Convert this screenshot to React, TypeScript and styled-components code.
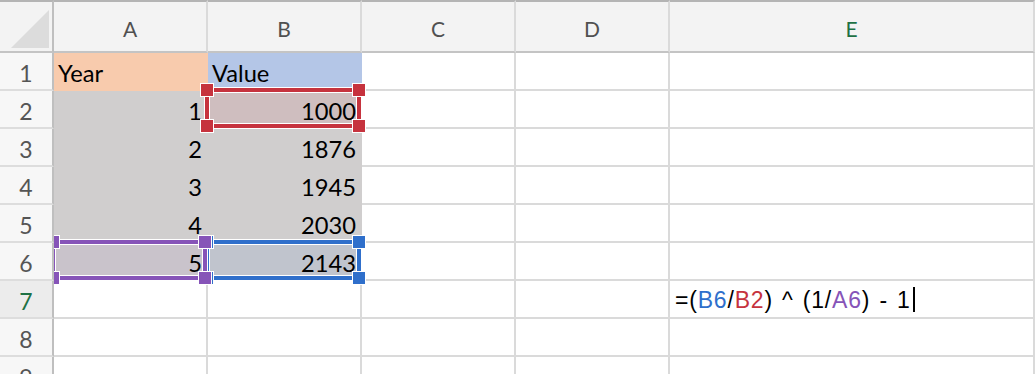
import styled, { createGlobalStyle } from 'styled-components';

const GlobalStyle = createGlobalStyle`
  html, body {
    margin: 0;
    padding: 0;
    background: #ffffff;
    overflow: hidden;
  }
  * { box-sizing: border-box; }
`;

const GRID = '#dadada';
const GREEN = '#1e7145';

const Sheet = styled.div`
  display: grid;
  grid-template-columns: 54px 154px 154px 154px 154px 365px;
  grid-template-rows: 53px;
  grid-auto-rows: 38px;
  width: 1036px;
  height: 374px;
  overflow: hidden;
  font-family: Lato, 'Open Sans', sans-serif;
`;

const Corner = styled.div`
  position: relative;
  z-index: 5;
  background: #f3f3f3;
  border-top: 2px solid #b4b4b4;
  border-right: 2px solid #bfbfbf;
  border-bottom: 2px solid #c4c4c4;
  display: flex;
  align-items: flex-end;
  justify-content: flex-end;
  padding: 0 3px 3px 0;
`;

const ColHeader = styled.div<{ $active?: boolean }>`
  background: #f3f3f3;
  border-top: 2px solid #b4b4b4;
  border-right: 2px solid #dadada;
  border-bottom: 2px solid #c4c4c4;
  display: flex;
  align-items: center;
  justify-content: center;
  padding-top: 3px;
  font-size: 21px;
  color: ${(p) => (p.$active ? GREEN : '#505050')};
`;

const RowHeader = styled.div<{ $active?: boolean }>`
  position: relative;
  z-index: 5;
  background: ${(p) => (p.$active ? '#ececec' : '#f7f7f7')};
  border-right: 2px solid #bfbfbf;
  border-bottom: 2px solid #dddddd;
  display: flex;
  align-items: center;
  justify-content: center;
  padding-top: 3px;
  font-size: 23px;
  color: ${(p) => (p.$active ? GREEN : '#555555')};
`;

const Cell = styled.div<{ $fill?: string; $align?: 'left' | 'right' }>`
  position: relative;
  background: ${(p) => p.$fill ?? '#ffffff'};
  border-right: 2px solid ${(p) => p.$fill ?? GRID};
  border-bottom: 2px solid ${(p) => p.$fill ?? GRID};
  display: flex;
  align-items: flex-end;
  justify-content: ${(p) => (p.$align === 'right' ? 'flex-end' : 'flex-start')};
  padding: 0 4px 2px 4px;
  font-size: 23.7px;
  line-height: 28px;
  color: #000000;
  white-space: nowrap;
`;

const Frame = styled.div<{ $color: string; $layer: number }>`
  position: absolute;
  z-index: ${(p) => p.$layer};
  left: -3px;
  top: -3px;
  right: -1px;
  bottom: -1px;
  border: 4px solid ${(p) => p.$color};
  box-shadow: 0 0 0 1px #ffffff, inset 0 0 0 1px #ffffff;
  pointer-events: none;
`;

const Handle = styled.span<{ $color: string; $x: 'left' | 'right'; $y: 'top' | 'bottom' }>`
  position: absolute;
  ${(p) => p.$x}: -9px;
  ${(p) => p.$y}: -9px;
  width: 14px;
  height: 14px;
  background: ${(p) => p.$color};
  border: 1.5px solid #ffffff;
`;

const Formula = styled.div`
  font-family: 'Liberation Sans', Arial, sans-serif;
  font-size: 23px;
  letter-spacing: 0.8px;
  word-spacing: 2px;
  line-height: 26px;
  color: #000000;
  display: flex;
  align-items: center;
  padding: 0 0 3px 1px;
`;

const Ref = styled.span<{ $color: string }>`
  color: ${(p) => p.$color};
`;

const Caret = styled.span`
  display: inline-block;
  width: 2px;
  height: 25px;
  margin-left: 2px;
  background: #000000;
`;

const FormulaCell = styled(Cell)`
  align-items: center;
  padding: 4px 4px 0 4px;
`;

const BLUE = '#2f6fcb';
const RED = '#c6333e';
const PURPLE = '#8654b8';

const PEACH = '#f8cbad';
const LIGHTBLUE = '#b4c6e7';
const GRAY = '#d0cece';

type CellDef = {
  text?: string;
  align?: 'left' | 'right';
  fill?: string;
  frame?: string;
  layer?: number;
};

const cols = ['A', 'B', 'C', 'D', 'E'];

const data: CellDef[][] = [
  [{ text: 'Year', fill: PEACH }, { text: 'Value', fill: LIGHTBLUE }],
  [{ text: '1', align: 'right', fill: GRAY }, { text: '1000', align: 'right', fill: '#cfbebf', frame: RED, layer: 1 }],
  [{ text: '2', align: 'right', fill: GRAY }, { text: '1876', align: 'right', fill: GRAY }],
  [{ text: '3', align: 'right', fill: GRAY }, { text: '1945', align: 'right', fill: GRAY }],
  [{ text: '4', align: 'right', fill: GRAY }, { text: '2030', align: 'right', fill: GRAY }],
  [
    { text: '5', align: 'right', fill: '#c9c3cb', frame: PURPLE, layer: 3 },
    { text: '2143', align: 'right', fill: '#c0c4cd', frame: BLUE, layer: 2 },
  ],
  [],
  [],
  [],
];

function RangeFrame({ color, layer }: { color: string; layer: number }) {
  return (
    <Frame $color={color} $layer={layer}>
      <Handle $color={color} $x="left" $y="top" />
      <Handle $color={color} $x="right" $y="top" />
      <Handle $color={color} $x="left" $y="bottom" />
      <Handle $color={color} $x="right" $y="bottom" />
    </Frame>
  );
}

function CornerMark() {
  return (
    <svg width="38" height="38" viewBox="0 0 38 38">
      <polygon points="0,38 38,0 38,38" fill="#dcdcdc" />
    </svg>
  );
}

export default function App() {
  return (
    <>
      <GlobalStyle />
      <Sheet>
        <Corner>
          <CornerMark />
        </Corner>
        {cols.map((c) => (
          <ColHeader key={c} $active={c === 'E'}>{c}</ColHeader>
        ))}

        {data.map((row, r) => {
          const rowNum = r + 1;
          return [
            <RowHeader key={`h${rowNum}`} $active={rowNum === 7}>{rowNum}</RowHeader>,
            ...cols.map((c, ci) => {
              if (rowNum === 7 && c === 'E') {
                return (
                  <FormulaCell key={`${c}${rowNum}`}>
                    <Formula>
                      =(<Ref $color={BLUE}>B6</Ref>/<Ref $color={RED}>B2</Ref>) ^ (1/<Ref $color={PURPLE}>A6</Ref>) - 1
                      <Caret />
                    </Formula>
                  </FormulaCell>
                );
              }
              const cell = row[ci] ?? {};
              return (
                <Cell key={`${c}${rowNum}`} $fill={cell.fill} $align={cell.align}>
                  {cell.text}
                  {cell.frame && <RangeFrame color={cell.frame} layer={cell.layer ?? 1} />}
                </Cell>
              );
            }),
          ];
        })}
      </Sheet>
    </>
  );
}
